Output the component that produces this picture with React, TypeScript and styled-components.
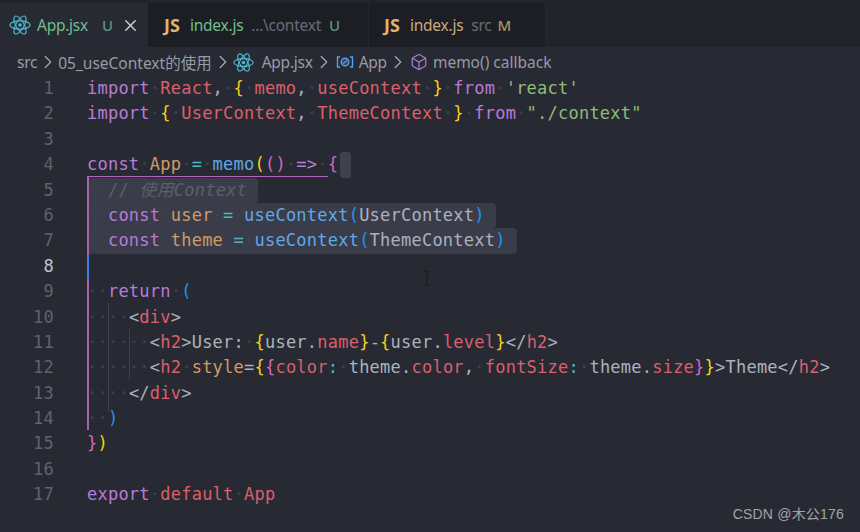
import React from "react"
import styled, { createGlobalStyle } from "styled-components"
import { Box, ChevronRight, X } from "lucide-react"

const GlobalStyle = createGlobalStyle`
    html, body {
        margin: 0;
        padding: 0;
        background: #282a33;
    }
`

const UI_FONT = `"Noto Sans", "Noto Sans CJK SC", sans-serif`
const CODE_FONT = `"DejaVu Sans Mono", "Noto Sans CJK SC", monospace`

const c = {
    purple: "#b87bd8",
    red: "#dc5f6b",
    yellow: "#f5cf17",
    magenta: "#d267c9",
    blue: "#5fa8e8",
    bracket: "#1f93ee",
    grey: "#abb2bf",
    green: "#8fbc78",
    orange: "#d19a66",
    cyan: "#4fb4bf",
    comment: "#5b5f6b",
}

const Page = styled.div`
    position: relative;
    width: 860px;
    height: 532px;
    overflow: hidden;
    background: #282a33;
`

const TabBar = styled.div`
    display: flex;
    box-sizing: border-box;
    height: 47px;
    padding-top: 3px;
    background: #22242b;
    font-family: ${UI_FONT};
    font-size: 15.5px;
    letter-spacing: -0.25px;
`

const Tab = styled.div<{ $active?: boolean, $width: number, $left: number }>`
    display: flex;
    align-items: center;
    box-sizing: border-box;
    width: ${(p) => p.$width}px;
    padding-left: ${(p) => p.$left}px;
    background: ${(p) => p.$active ? "#282a33" : "#1c1e24"};
    border-right: ${(p) => p.$active ? "none" : "1px solid #252730"};
`

const JsBadge = styled.span`
    width: 18px;
    margin-right: 8px;
    color: #e2b36c;
    font-weight: 700;
    font-size: 18px;
    letter-spacing: 0;
`

const TabName = styled.span<{ $color: string, $gap: number, $left?: number }>`
    color: ${(p) => p.$color};
    margin-left: ${(p) => p.$left || 0}px;
    margin-right: ${(p) => p.$gap}px;
`

const TabHint = styled.span<{ $gap: number }>`
    color: #686c77;
    margin-right: ${(p) => p.$gap}px;
`

const TabStatus = styled.span<{ $color: string, $gap?: number }>`
    color: ${(p) => p.$color};
    font-size: 15px;
    font-weight: 500;
    margin-right: ${(p) => p.$gap || 0}px;
`

const Breadcrumbs = styled.div`
    display: flex;
    align-items: center;
    height: 29px;
    padding-left: 17px;
    padding-top: 1px;
    box-sizing: border-box;
    color: #989ba5;
    font-family: ${UI_FONT};
    font-size: 15.5px;
    white-space: nowrap;
`

const Crumb = styled.span<{ $left?: number, $tight?: boolean }>`
    margin-left: ${(p) => p.$left || 0}px;
    letter-spacing: ${(p) => p.$tight ? "-0.25px" : "0"};
`

const Sep = styled(ChevronRight)<{ $right?: number }>`
    flex: none;
    margin-right: ${(p) => p.$right ?? 1}px;
    color: #a6a9b2;
`

const Editor = styled.div`
    position: relative;
    font-family: ${CODE_FONT};
    font-size: 17px;
    letter-spacing: 0.23px;
`

const Row = styled.div`
    display: flex;
    height: 25.4px;
    line-height: 25.4px;
    white-space: pre;
`

const LineNumber = styled.span<{ $active?: boolean }>`
    width: 54px;
    margin-right: 33px;
    text-align: right;
    color: ${(p) => p.$active ? "#c2c5cc" : "#5d6270"};
`

const Code = styled.span<{ $selected?: boolean, $round?: boolean, $pad?: number }>`
    display: inline-block;
    height: 25.4px;
    padding-right: ${(p) => p.$selected ? 11 : 0}px;
    background: ${(p) => p.$selected ? "#3a3d49" : "transparent"};
    border-radius: ${(p) => p.$round ? "4px 4px 4px 0" : "0 4px 4px 0"};
`

const Token = styled.span<{ $color: string, $italic?: boolean }>`
    color: ${(p) => p.$color};
    font-style: ${(p) => p.$italic ? "italic" : "normal"};
`

const Dot = styled.span`
    color: #3f424c;
`

const MatchedBrace = styled.span`
    background: #3f424d;
    border-radius: 3px;
    display: inline-block;
    height: 25.4px;
    width: 10.5px;
    margin-left: 2px;
`

const GuideV = styled.div<{ $x: number, $top: number, $h: number, $color: string, $w?: number }>`
    position: absolute;
    left: ${(p) => p.$x}px;
    top: ${(p) => p.$top}px;
    width: ${(p) => p.$w || 1}px;
    height: ${(p) => p.$h}px;
    background: ${(p) => p.$color};
`

const GuideTop = styled.div`
    position: absolute;
    left: 87px;
    top: 100px;
    width: 241px;
    height: 1px;
    background: #b565c0;
`

const Blue = styled.div`
    position: absolute;
    left: 87px;
    top: 179px;
    width: 2px;
    height: 25px;
    background: #3f7fd6;
`

const Cursor = styled.svg`
    position: absolute;
    left: 423px;
    top: 194px;
`

const Watermark = styled.div`
    position: absolute;
    right: 16px;
    bottom: 9px;
    color: #a3a4a8;
    font-family: "Liberation Sans", "Noto Sans CJK SC", sans-serif;
    font-size: 14px;
    letter-spacing: 0.2px;
`

const ReactIcon = ({ size }: { size: number }) => (
    <svg width={size} height={size} viewBox="0 0 24 24" fill="none" stroke="#4fb8cf" strokeWidth="1.3">
        <circle cx="12" cy="12" r="2" fill="#4fb8cf" stroke="none" />
        <ellipse cx="12" cy="12" rx="11" ry="4.4" />
        <ellipse cx="12" cy="12" rx="11" ry="4.4" transform="rotate(60 12 12)" />
        <ellipse cx="12" cy="12" rx="11" ry="4.4" transform="rotate(120 12 12)" />
    </svg>
)

const VariableIcon = () => (
    <svg width="18" height="16" viewBox="0 0 18 16" fill="none" stroke="#5a9fe6" strokeWidth="1.4">
        <path d="M4 3H1.5v10H4" />
        <path d="M14 3h2.5v10H14" />
        <circle cx="9" cy="8" r="3.8" fill="#5a9fe6" fillOpacity="0.25" />
        <path d="M7 9.5l4-3" />
    </svg>
)

type Tok = [string, string] | [string, string, boolean]

const spaced = (text: string) =>
    text.split(/( )/).map((part, i) => part === " " ? <Dot key={i}>·</Dot> : part)

const t = (text: string, color: string): Tok => [text, color]

const lt = t("<", c.grey)
const gt = t(">", c.grey)
const closeTag = t("</", c.grey)

const lines: Tok[][] = [
    [t("import", c.purple), t(" ", c.grey), t("React", c.red), t(",", c.grey), t(" ", c.grey), t("{", c.yellow), t(" ", c.grey), t("memo", c.red), t(",", c.grey), t(" ", c.grey), t("useContext", c.red), t(" ", c.grey), t("}", c.yellow), t(" ", c.grey), t("from", c.purple), t(" ", c.grey), t("'react'", c.green)],
    [t("import", c.purple), t(" ", c.grey), t("{", c.yellow), t(" ", c.grey), t("UserContext", c.red), t(",", c.grey), t(" ", c.grey), t("ThemeContext", c.red), t(" ", c.grey), t("}", c.yellow), t(" ", c.grey), t("from", c.purple), t(" ", c.grey), t('"./context"', c.green)],
    [],
    [t("const", c.purple), t(" ", c.grey), t("App", c.orange), t(" ", c.grey), t("=", c.cyan), t(" ", c.grey), t("memo", c.blue), t("(", c.yellow), t("()", c.magenta), t(" ", c.grey), t("=>", c.purple), t(" ", c.grey), t("{", c.magenta)],
    [t("  ", c.grey), t("// ", c.comment), ["使用Context", c.comment, true]],
    [t("  ", c.grey), t("const", c.purple), t(" ", c.grey), t("user", c.orange), t(" ", c.grey), t("=", c.cyan), t(" ", c.grey), t("useContext", c.blue), t("(", c.bracket), t("UserContext", c.grey), t(")", c.bracket)],
    [t("  ", c.grey), t("const", c.purple), t(" ", c.grey), t("theme", c.orange), t(" ", c.grey), t("=", c.cyan), t(" ", c.grey), t("useContext", c.blue), t("(", c.bracket), t("ThemeContext", c.grey), t(")", c.bracket)],
    [],
    [t("  ", c.grey), t("return", c.purple), t(" ", c.grey), t("(", c.bracket)],
    [t("    ", c.grey), lt, t("div", c.red), gt],
    [t("      ", c.grey), lt, t("h2", c.red), gt, t("User:", c.grey), t(" ", c.grey), t("{", c.yellow), t("user.", c.grey), t("name", c.red), t("}", c.yellow), t("-", c.grey), t("{", c.yellow), t("user.", c.grey), t("level", c.red), t("}", c.yellow), closeTag, t("h2", c.red), gt],
    [t("      ", c.grey), lt, t("h2", c.red), t(" ", c.grey), t("style", c.orange), t("=", c.grey), t("{", c.yellow), t("{", c.magenta), t("color", c.red), t(":", c.cyan), t(" ", c.grey), t("theme.", c.grey), t("color", c.red), t(",", c.grey), t(" ", c.grey), t("fontSize", c.red), t(":", c.cyan), t(" ", c.grey), t("theme.", c.grey), t("size", c.red), t("}", c.magenta), t("}", c.yellow), gt, t("Theme", c.grey), closeTag, t("h2", c.red), gt],
    [t("    ", c.grey), closeTag, t("div", c.red), gt],
    [t("  ", c.grey), t(")", c.bracket)],
    [t("}", c.magenta), t(")", c.yellow)],
    [],
    [t("export", c.purple), t(" ", c.grey), t("default", c.red), t(" ", c.grey), t("App", c.red)],
]

const App = () => {
    return (
        <Page>
            <GlobalStyle />
            <TabBar>
                <Tab $active $width={148} $left={9}>
                    <ReactIcon size={22} />
                    <TabName $color="#6fbf8b" $gap={14} $left={6}>App.jsx</TabName>
                    <TabStatus $color="#5c9478" $gap={8}>U</TabStatus>
                    <X size={19} color="#c9ccd3" strokeWidth={1.8} />
                </Tab>
                <Tab $width={221} $left={16}>
                    <JsBadge>JS</JsBadge>
                    <TabName $color="#6fbf8b" $gap={8}>index.js</TabName>
                    <TabHint $gap={8}>...\context</TabHint>
                    <TabStatus $color="#5c9478">U</TabStatus>
                </Tab>
                <Tab $width={177} $left={15}>
                    <JsBadge>JS</JsBadge>
                    <TabName $color="#c8ab7e" $gap={8}>index.js</TabName>
                    <TabHint $gap={6}>src</TabHint>
                    <TabStatus $color="#a8936f">M</TabStatus>
                </Tab>
            </TabBar>
            <Breadcrumbs>
                <Crumb $tight>src</Crumb>
                <Sep size={22} strokeWidth={1.3} $right={-1} />
                <Crumb>05_useContext的使用</Crumb>
                <Sep size={22} strokeWidth={1.3} $right={-1} />
                <ReactIcon size={21} />
                <Crumb $left={8} $tight>App.jsx</Crumb>
                <Sep size={22} strokeWidth={1.3} />
                <VariableIcon />
                <Crumb $left={5} $tight>App</Crumb>
                <Sep size={22} strokeWidth={1.3} />
                <Box size={18} color="#a87fd6" strokeWidth={1.6} />
                <Crumb $left={5}>memo() callback</Crumb>
            </Breadcrumbs>
            <Editor>
                {lines.map((tokens, i) => {
                    const selected = i >= 4 && i <= 6
                    return (
                        <Row key={i}>
                            <LineNumber $active={i === 7}>{i + 1}</LineNumber>
                            <Code $selected={selected} $round={i === 4}>
                                {tokens.map((tok, j) => (
                                    <Token key={j} $color={tok[1]} $italic={tok[2] === true}>
                                        {spaced(tok[0])}
                                    </Token>
                                ))}
                            </Code>
                            {i === 3 && <MatchedBrace />}
                        </Row>
                    )
                })}
                <GuideTop />
                <GuideV $x={87} $top={100} $h={254} $color="#a55fb3" $w={2} />
                <GuideV $x={108} $top={227} $h={109} $color="#3d404a" />
                <GuideV $x={129} $top={253} $h={51} $color="#3d404a" />
                <Blue />
                <Cursor width="8" height="16" viewBox="0 0 8 16" fill="none" stroke="#1a1b1f" strokeWidth="1.2">
                    <path d="M1 1h6M4 1v14M1 15h6" />
                </Cursor>
            </Editor>
            <Watermark>CSDN @木公176</Watermark>
        </Page>
    )
}

export default App
